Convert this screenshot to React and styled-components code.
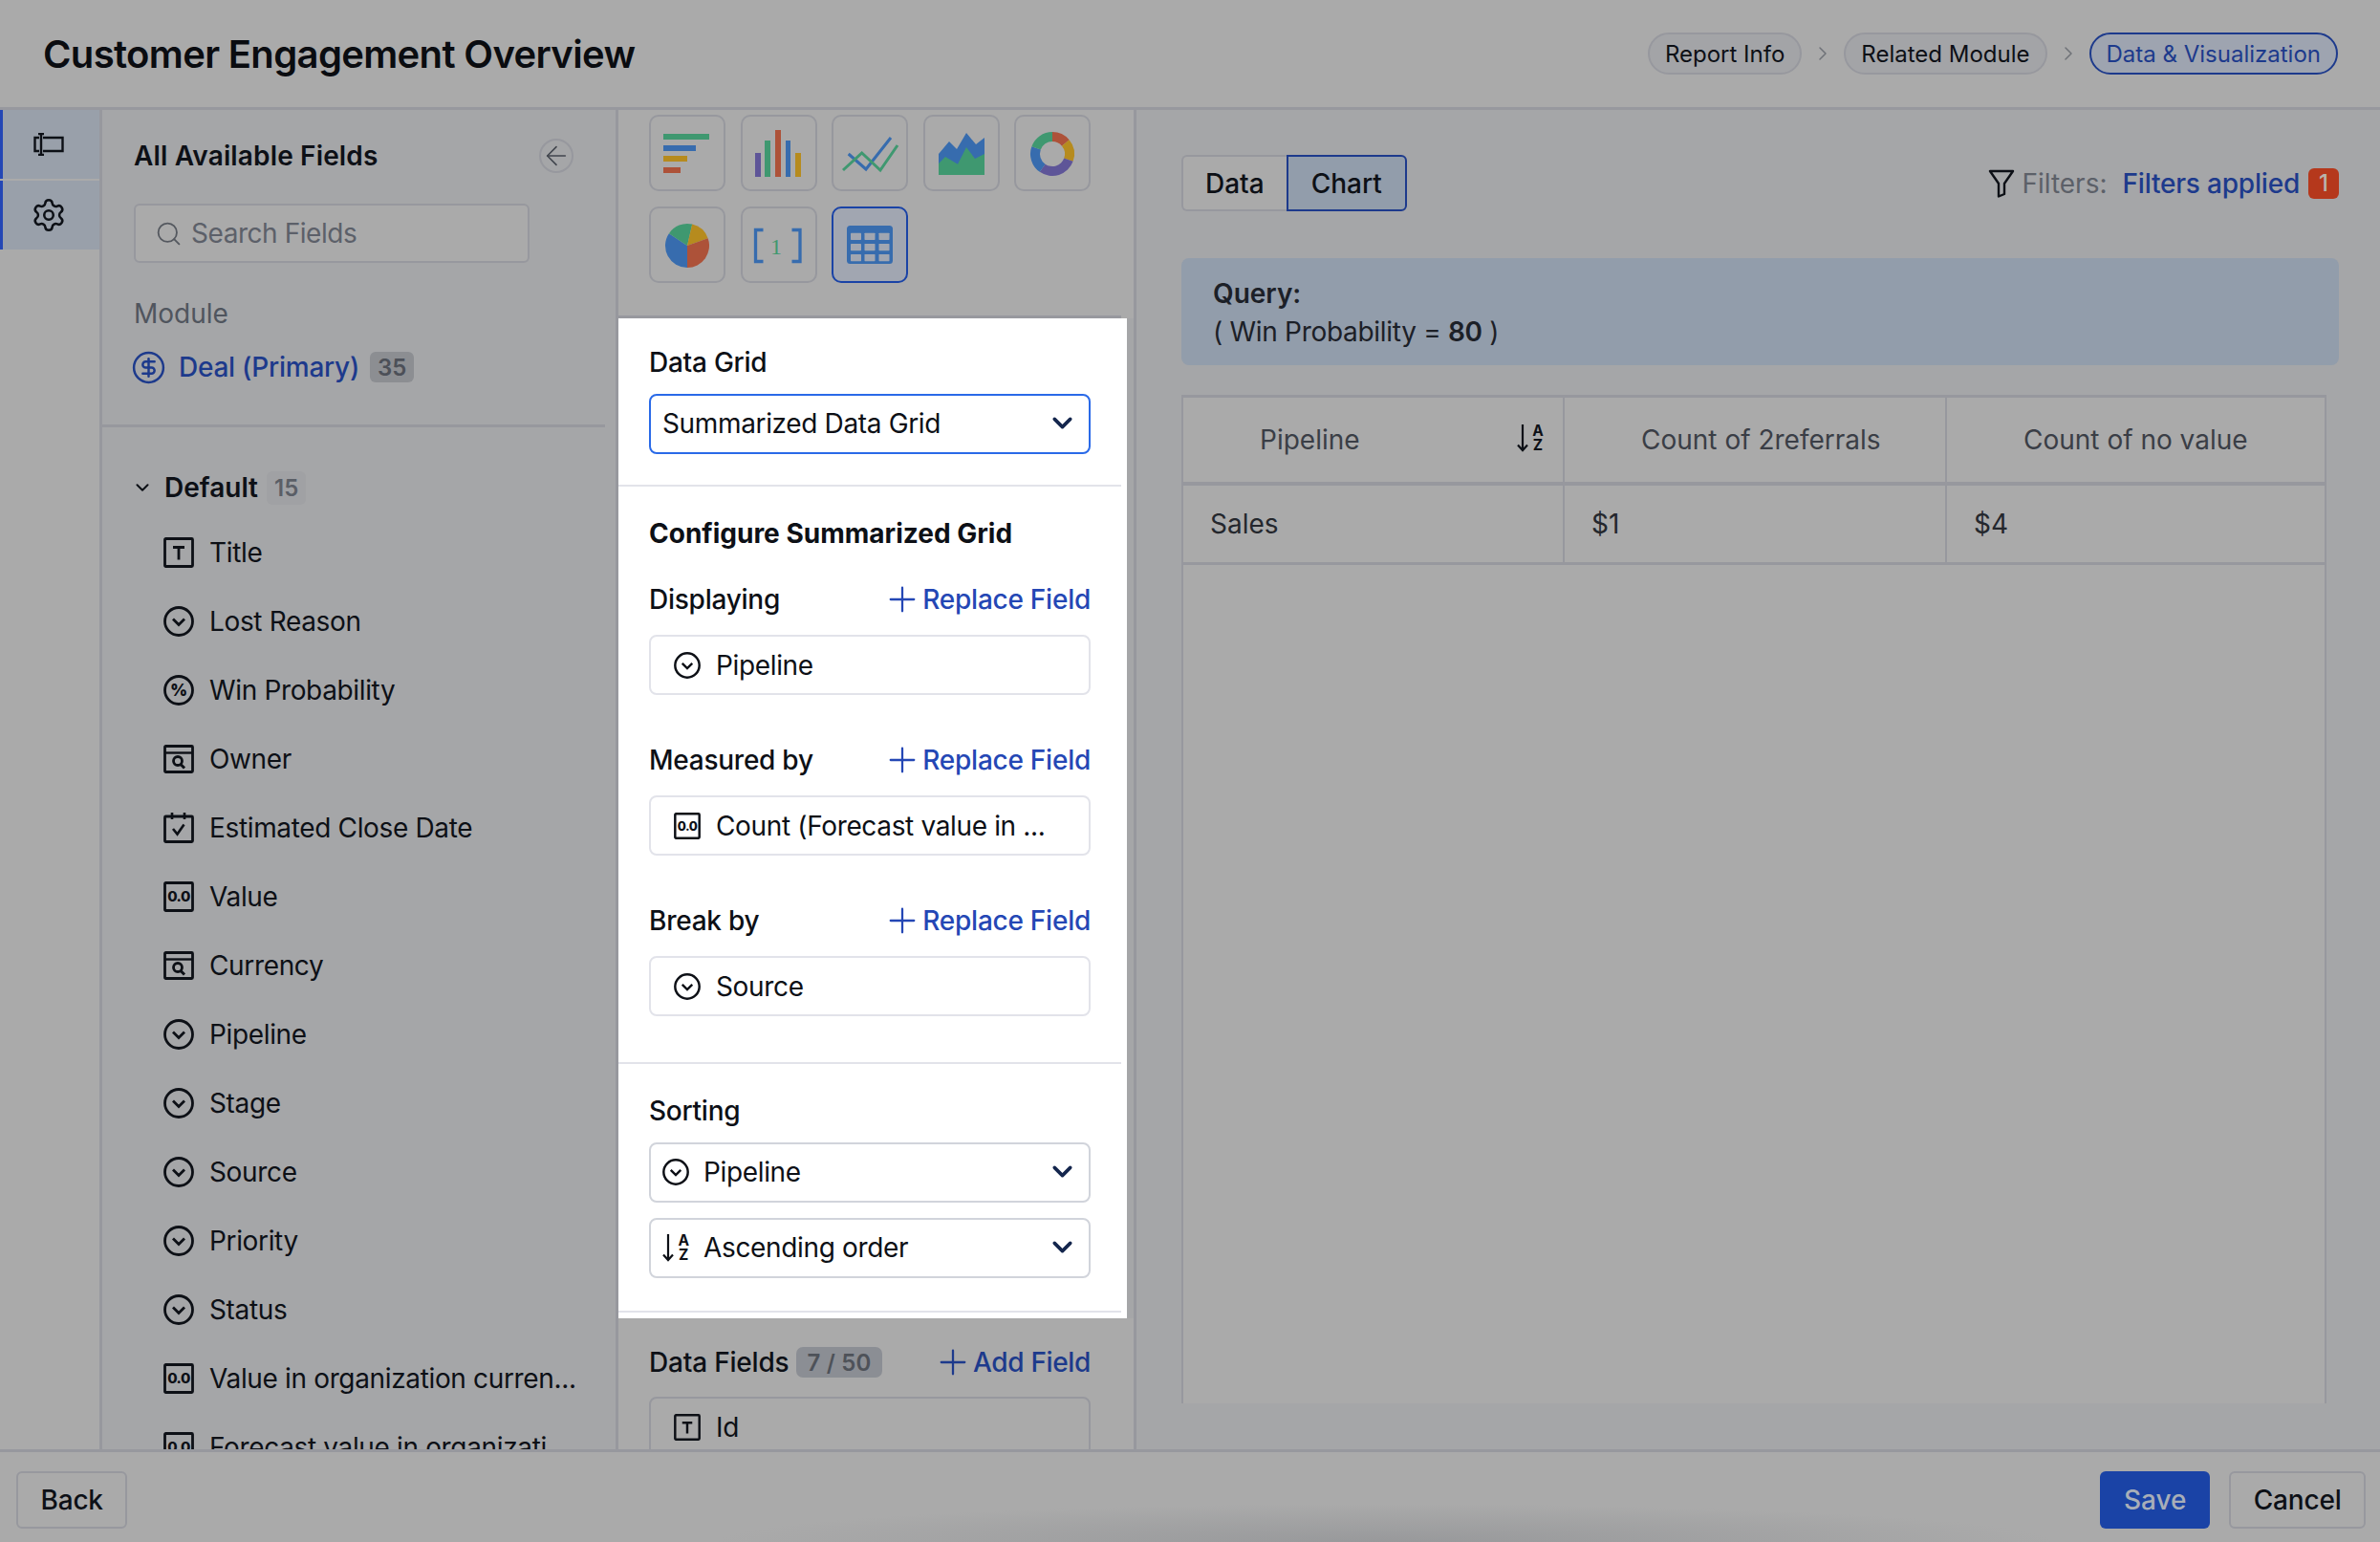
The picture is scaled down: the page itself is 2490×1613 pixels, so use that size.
import styled, { createGlobalStyle } from "styled-components";
import { ArrowLeft, ChevronDown, ChevronRight, CircleDollarSign, Plus, Search, Settings } from "lucide-react";

const COLORS = {
    bar: "#aaaaaa",
    panel: "#a5a6a8",
    line: "#97989e",
    ink: "#0d1016",
    muted: "#50555e",
    navy: "#1d3a8c",
    blue: "#2447b5",
    active: "#929dab",
    green: "#3f9870",
    sky: "#376cae",
    amber: "#b68b1e",
    red: "#ad5239",
    violet: "#5e5598",
};

const GlobalStyle = createGlobalStyle`
    html, body {
        margin: 0;
        padding: 0;
        background: ${COLORS.bar};
        overflow: hidden;
    }
    * {
        box-sizing: border-box;
    }
    body {
        font-family: Inter, "Liberation Sans", sans-serif;
        color: ${COLORS.ink};
    }
`;

const polar = (cx, cy, r, deg) => {
    const rad = ((deg - 90) * Math.PI) / 180;
    return [cx + r * Math.cos(rad), cy + r * Math.sin(rad)];
};

const Slice = ({ from, to, color, hole = 0 }) => {
    const [x0, y0] = polar(40, 40, 23, from);
    const [x1, y1] = polar(40, 40, 23, to);
    const large = to - from > 180 ? 1 : 0;
    if (!hole) {
        return <path d={`M40 40L${x0} ${y0}A23 23 0 ${large} 1 ${x1} ${y1}Z`} fill={color} />;
    }
    const [x2, y2] = polar(40, 40, hole, to);
    const [x3, y3] = polar(40, 40, hole, from);
    return (
        <path
            d={`M${x0} ${y0}A23 23 0 ${large} 1 ${x1} ${y1}L${x2} ${y2}A${hole} ${hole} 0 ${large} 0 ${x3} ${y3}Z`}
            fill={color}
        />
    );
};

const ChartSvg = ({ children }) => (
    <svg width="76" height="75" viewBox="2 2 76 75">{children}</svg>
);

const chartIcons = [
    <ChartSvg key="hbar">
        <rect x="15" y="19" width="48" height="6" fill={COLORS.green} />
        <rect x="15" y="31" width="34" height="6" fill={COLORS.sky} />
        <rect x="15" y="42" width="25" height="6" fill={COLORS.amber} />
        <rect x="15" y="54" width="18" height="6" fill={COLORS.red} />
    </ChartSvg>,
    <ChartSvg key="vbar">
        <rect x="15" y="39" width="6" height="25" fill={COLORS.violet} />
        <rect x="25" y="26" width="6" height="38" fill={COLORS.green} />
        <rect x="36" y="15" width="6" height="49" fill={COLORS.red} />
        <rect x="47" y="26" width="5" height="38" fill={COLORS.sky} />
        <rect x="57" y="39" width="6" height="25" fill={COLORS.amber} />
    </ChartSvg>,
    <ChartSvg key="line">
        <polyline points="17.7,40 36,56 62,23" fill="none" stroke={COLORS.sky} strokeWidth="3" />
        <polyline points="12,57 31.7,39 51,57 69,31" fill="none" stroke={COLORS.green} strokeWidth="3" />
    </ChartSvg>,
    <ChartSvg key="area">
        <polygon points="16,40 27,27 35,35 45,18 55,30 64,23 64,62 16,62" fill={COLORS.sky} />
        <polygon points="16,50 23,43 36,50.7 45,33 54,45 64,40 64,62 16,62" fill={COLORS.green} />
    </ChartSvg>,
    <ChartSvg key="donut">
        <Slice from={0} to={50} color={COLORS.red} hole={13} />
        <Slice from={50} to={110} color={COLORS.amber} hole={13} />
        <Slice from={110} to={215} color={COLORS.violet} hole={13} />
        <Slice from={215} to={290} color={COLORS.sky} hole={13} />
        <Slice from={290} to={360} color={COLORS.green} hole={13} />
    </ChartSvg>,
    <ChartSvg key="pie">
        <Slice from={180} to={304} color={COLORS.sky} />
        <Slice from={304} to={373} color={COLORS.green} />
        <Slice from={13} to={70} color={COLORS.amber} />
        <Slice from={70} to={180} color={COLORS.red} />
    </ChartSvg>,
    <ChartSvg key="number">
        <path d="M23.5 23.5H15.5V56.5H23.5M53.5 23.5H62V56.5H53.5" fill="none" stroke={COLORS.sky} strokeWidth="3.3" />
        <text x="37" y="49" textAnchor="middle" fontFamily="'Liberation Serif', serif" fontSize="24" fill={COLORS.green}>1</text>
    </ChartSvg>,
    <ChartSvg key="table">
        <rect x="16" y="19" width="48" height="40" rx="3.5" fill={COLORS.sky} />
        {[26.7, 38, 49].map(y => [20, 34.5, 49.5].map(x => (
            <rect key={`${x}-${y}`} x={x} y={y} width="11" height="7.2" rx="0.6" fill="#a1a6b1" />
        )))}
    </ChartSvg>,
];

const TextBox = () => (
    <svg viewBox="0 0 32 32" width="100%" height="100%" fill="none" stroke="currentColor">
        <rect x="1.5" y="1.5" width="29" height="29" rx="1" strokeWidth="2.8" />
        <path d="M10 10.5H22M16 10.5V23.5" strokeWidth="2.8" />
    </svg>
);

const PickCircle = () => (
    <svg viewBox="0 0 32 32" width="100%" height="100%" fill="none" stroke="currentColor">
        <circle cx="16" cy="16" r="14.5" strokeWidth="2.8" />
        <path d="M10 13.5L16 19.5L22 13.5" strokeWidth="2.8" />
    </svg>
);

const PercentCircle = () => (
    <svg viewBox="0 0 32 32" width="100%" height="100%" fill="none" stroke="currentColor">
        <circle cx="16" cy="16" r="14.5" strokeWidth="2.8" />
        <text x="16" y="22.3" textAnchor="middle" fontFamily="Inter, sans-serif" fontWeight="900" fontSize="17" fill="currentColor" stroke="none">%</text>
    </svg>
);

const LookupBox = () => (
    <svg viewBox="0 0 32 32" width="100%" height="100%" fill="none" stroke="currentColor">
        <rect x="1.5" y="2.5" width="29" height="27" rx="1" strokeWidth="2.8" />
        <path d="M1.5 9.5H30.5" strokeWidth="2.4" />
        <circle cx="15" cy="18" r="4.5" strokeWidth="2.8" />
        <path d="M18 21.5L22 25.5" strokeWidth="3" />
    </svg>
);

const CalendarBox = () => (
    <svg viewBox="0 0 32 32" width="100%" height="100%" fill="none" stroke="currentColor">
        <rect x="1.5" y="4" width="29" height="26.5" rx="1" strokeWidth="2.8" />
        <path d="M9 0V7M22 0V7" strokeWidth="2.6" />
        <path d="M10 17L14.5 22.5L21.5 12.5" strokeWidth="2.6" />
    </svg>
);

const NumberBox = () => (
    <svg viewBox="0 0 32 32" width="100%" height="100%" fill="none" stroke="currentColor">
        <rect x="1.5" y="1.5" width="29" height="29" rx="1" strokeWidth="2.8" />
        <text x="16" y="21.3" textAnchor="middle" fontFamily="Inter, sans-serif" fontWeight="800" fontSize="15" letterSpacing="-0.5" fill="currentColor" stroke="none">0.0</text>
    </svg>
);

const SortIcon = () => (
    <svg width="30" height="32" viewBox="0 0 30 32" fill="none" stroke="currentColor">
        <path d="M6 2V28.500M1 23.500L6 29L11 23.500" strokeWidth="2.2" />
        <text x="22" y="14" textAnchor="middle" fontFamily="Inter, sans-serif" fontWeight="700" fontSize="15.5" fill="currentColor" stroke="none">A</text>
        <text x="22" y="29" textAnchor="middle" fontFamily="Inter, sans-serif" fontWeight="700" fontSize="15.5" fill="currentColor" stroke="none">Z</text>
    </svg>
);

const FIELD_ICONS = {
    text: TextBox,
    pick: PickCircle,
    percent: PercentCircle,
    lookup: LookupBox,
    date: CalendarBox,
    number: NumberBox,
};

const FIELDS = [
    ["text", "Title"],
    ["pick", "Lost Reason"],
    ["percent", "Win Probability"],
    ["lookup", "Owner"],
    ["date", "Estimated Close Date"],
    ["number", "Value"],
    ["lookup", "Currency"],
    ["pick", "Pipeline"],
    ["pick", "Stage"],
    ["pick", "Source"],
    ["pick", "Priority"],
    ["pick", "Status"],
    ["number", "Value in organization curren..."],
    ["number", "Forecast value in organizati..."],
];

const CONFIG_ROWS = [
    ["Displaying", "pick", "Pipeline"],
    ["Measured by", "number", "Count (Forecast value in ..."],
    ["Break by", "pick", "Source"],
];

const FieldIcon = ({ kind, size = 32 }) => {
    const Icon = FIELD_ICONS[kind];
    return (
        <IconSlot $size={size}>
            <Icon />
        </IconSlot>
    );
};

const App = () => {
    return (
        <Page>
            <GlobalStyle />
            <Header>
                <PageTitle>Customer Engagement Overview</PageTitle>
                <Steps>
                    <Step>Report Info</Step>
                    <StepArrow><ChevronRight size={24} strokeWidth={1.5} /></StepArrow>
                    <Step>Related Module</Step>
                    <StepArrow><ChevronRight size={24} strokeWidth={1.5} /></StepArrow>
                    <Step $current>Data &amp; Visualization</Step>
                </Steps>
            </Header>

            <Body>
                <Rail>
                    <RailItem>
                        <svg width="32" height="24" viewBox="0 0 32 24" fill="none" stroke={COLORS.ink} strokeWidth="2.4">
                            <path d="M10 5H30.5V19H10M6 5H1.5V19H6" />
                            <path d="M8 1V23M5 1H11M5 23H11" />
                        </svg>
                    </RailItem>
                    <RailItem>
                        <Settings size={38} strokeWidth={1.6} />
                    </RailItem>
                </Rail>

                <FieldsPanel>
                    <FieldsTop>
                        <TitleRow>
                            <PanelTitle>All Available Fields</PanelTitle>
                            <RoundButton><ArrowLeft size={32} strokeWidth={1.2} /></RoundButton>
                        </TitleRow>
                        <SearchBox>
                            <Search size={29} strokeWidth={1.5} />
                            Search Fields
                        </SearchBox>
                        <ModuleLabel>Module</ModuleLabel>
                        <ModuleRow>
                            <DollarIcon />
                            <ModuleName>Deal (Primary)</ModuleName>
                            <Count>35</Count>
                        </ModuleRow>
                    </FieldsTop>
                    <GroupRow>
                        <ChevronDown size={22} strokeWidth={2.2} />
                        <GroupName>Default</GroupName>
                        <GroupCount>15</GroupCount>
                    </GroupRow>
                    <FieldList>
                        {FIELDS.map(([kind, name]) => (
                            <FieldRow key={name}>
                                <FieldIcon kind={kind} />
                                {name}
                            </FieldRow>
                        ))}
                    </FieldList>
                </FieldsPanel>

                <ConfigColumn>
                    <TileArea>
                        <Tiles>
                            {chartIcons.map((icon, i) => (
                                <Tile key={i} $active={i === 7}>{icon}</Tile>
                            ))}
                        </Tiles>
                    </TileArea>
                    <TileRule />
                    <ConfigBand>
                        <ConfigCard>
                            <GridSection>
                                <FieldLabel>Data Grid</FieldLabel>
                                <SelectBox $focus>
                                    <span>Summarized Data Grid</span>
                                    <SelectChevron />
                                </SelectBox>
                            </GridSection>
                            <SetupSection>
                                <SetupTitle>Configure Summarized Grid</SetupTitle>
                                {CONFIG_ROWS.map(([label, kind, value]) => (
                                    <SetupBlock key={label}>
                                        <LabelRow>
                                            <FieldLabel>{label}</FieldLabel>
                                            <ReplaceLink><PlusIcon />Replace Field</ReplaceLink>
                                        </LabelRow>
                                        <ValueBox>
                                            <FieldIcon kind={kind} size={28} />
                                            {value}
                                        </ValueBox>
                                    </SetupBlock>
                                ))}
                            </SetupSection>
                            <SortSection>
                                <FieldLabel>Sorting</FieldLabel>
                                <SelectBox>
                                    <SelectValue><FieldIcon kind="pick" size={28} />Pipeline</SelectValue>
                                    <SelectChevron />
                                </SelectBox>
                                <SelectBox>
                                    <SelectValue $tight><SortIcon />Ascending order</SelectValue>
                                    <SelectChevron />
                                </SelectBox>
                            </SortSection>
                        </ConfigCard>
                    </ConfigBand>
                    <DataFields>
                        <LabelRow>
                            <DataLabel>Data Fields <FieldsCount>7 / 50</FieldsCount></DataLabel>
                            <AddLink><PlusIcon />Add Field</AddLink>
                        </LabelRow>
                        <IdBox>
                            <FieldIcon kind="text" size={28} />
                            Id
                        </IdBox>
                    </DataFields>
                </ConfigColumn>

                <Main>
                    <MainTop>
                        <Tabs>
                            <TabButton>Data</TabButton>
                            <TabButton $active>Chart</TabButton>
                        </Tabs>
                        <FilterInfo>
                            <svg width="28" height="30" viewBox="0 0 28 30" fill="none" stroke={COLORS.ink} strokeWidth="2.4" strokeLinejoin="round">
                                <path d="M2 2H26L17 15V26L11 28.5V15Z" />
                            </svg>
                            <FilterLabel>Filters:</FilterLabel>
                            <FilterValue>Filters applied</FilterValue>
                            <FilterBadge>1</FilterBadge>
                        </FilterInfo>
                    </MainTop>
                    <QueryBox>
                        <QueryTitle>Query:</QueryTitle>
                        <QueryText>( Win Probability = <b>80</b> )</QueryText>
                    </QueryBox>
                    <TableWrap>
                        <HeadRow>
                            <HeadCell $pad={82}>
                                Pipeline
                                <SortGlyph><SortIcon /></SortGlyph>
                            </HeadCell>
                            <HeadCell $pad={82}>Count of 2referrals</HeadCell>
                            <HeadCell $pad={82}>Count of no value</HeadCell>
                        </HeadRow>
                        <DataRow>
                            <DataCell>Sales</DataCell>
                            <DataCell>$1</DataCell>
                            <DataCell>$4</DataCell>
                        </DataRow>
                    </TableWrap>
                </Main>
            </Body>

            <Footer>
                <GhostButton>Back</GhostButton>
                <FooterActions>
                    <SaveButton>Save</SaveButton>
                    <GhostButton>Cancel</GhostButton>
                </FooterActions>
            </Footer>
        </Page>
    );
};

const Page = styled.div`
    width: 2490px;
    height: 1613px;
    display: flex;
    flex-direction: column;
    overflow: hidden;
    background: ${COLORS.bar};
`;

const Header = styled.header`
    height: 115px;
    flex: none;
    padding: 0 44px 0 45px;
    display: flex;
    align-items: center;
    justify-content: space-between;
    border-bottom: 3px solid ${COLORS.line};
`;

const PageTitle = styled.h1`
    margin: 0;
    font-size: 40px;
    font-weight: 600;
    letter-spacing: -0.65px;
    color: #0a0c10;
`;

const Steps = styled.nav`
    display: flex;
    align-items: center;
`;

const Step = styled.span`
    height: 44px;
    padding: 0 16px;
    display: flex;
    align-items: center;
    font-size: 24px;
    border-radius: 22px;
    border: 2.5px solid ${p => (p.$current ? COLORS.navy : COLORS.line)};
    background: ${p => (p.$current ? "#9ea4b0" : "#a3a4a7")};
    color: ${p => (p.$current ? COLORS.navy : COLORS.ink)};
`;

const StepArrow = styled.span`
    width: 44px;
    display: flex;
    justify-content: center;
    color: #6f7278;
`;

const Body = styled.div`
    height: 1401px;
    flex: none;
    display: flex;
    overflow: hidden;
`;

const Rail = styled.aside`
    width: 107px;
    flex: none;
    border-right: 3px solid ${COLORS.line};
    background: ${COLORS.bar};
`;

const RailItem = styled.div`
    height: 72px;
    margin-bottom: 2px;
    padding-right: 6px;
    display: flex;
    align-items: center;
    justify-content: center;
    background: #99a0aa;
    border-left: 3px solid ${COLORS.blue};
`;

const FieldsPanel = styled.section`
    width: 540px;
    flex: none;
    overflow: hidden;
    background: ${COLORS.panel};
    border-right: 3px solid ${COLORS.line};
`;

const FieldsTop = styled.div`
    width: 526px;
    padding: 30px 0 44px 33px;
    border-bottom: 3px solid ${COLORS.line};
`;

const TitleRow = styled.div`
    width: 460px;
    height: 36px;
    display: flex;
    align-items: center;
    justify-content: space-between;
`;

const PanelTitle = styled.h2`
    margin: 0;
    font-size: 28px;
    font-weight: 600;
    letter-spacing: 0.15px;
`;

const RoundButton = styled.span`
    width: 36px;
    height: 36px;
    border-radius: 50%;
    border: 2px solid ${COLORS.line};
    display: flex;
    align-items: center;
    justify-content: center;
    color: #42464e;
`;

const SearchBox = styled.div`
    width: 414px;
    height: 62px;
    margin-top: 32px;
    padding-left: 20px;
    display: flex;
    align-items: center;
    gap: 9px;
    font-size: 28px;
    letter-spacing: -0.45px;
    color: #5c6069;
    background: ${COLORS.bar};
    border: 2.5px solid ${COLORS.line};
    border-radius: 6px;
    svg {
        color: #54585f;
    }
`;

const ModuleLabel = styled.div`
    margin-top: 36px;
    height: 34px;
    line-height: 34px;
    font-size: 28px;
    color: ${COLORS.muted};
`;

const ModuleRow = styled.div`
    margin-top: 23px;
    height: 32px;
    display: flex;
    align-items: center;
    color: ${COLORS.navy};
`;

const DollarIcon = styled(CircleDollarSign).attrs({ size: 37, strokeWidth: 1.6 })`
    margin: 0 -2px 0 -3px;
`;

const ModuleName = styled.span`
    margin-left: 15px;
    font-size: 28px;
    font-weight: 500;
    letter-spacing: -0.25px;
`;

const Count = styled.span`
    margin-left: 11px;
    height: 32px;
    padding: 0 8px;
    display: flex;
    align-items: center;
    font-size: 24px;
    font-weight: 600;
    color: #4c5058;
    background: #8c8e92;
    border-radius: 6px;
`;

const GroupRow = styled.div`
    margin-top: 45px;
    padding-left: 31px;
    height: 36px;
    display: flex;
    align-items: center;
`;

const GroupName = styled.span`
    margin-left: 12px;
    font-size: 28px;
    font-weight: 600;
`;

const GroupCount = styled.span`
    margin-left: 9px;
    padding: 3px 8px;
    font-size: 24px;
    font-weight: 600;
    color: #5a5e66;
    background: #a0a1a4;
    border-radius: 6px;
`;

const FieldList = styled.ul`
    margin: 14px 0 0;
    padding: 0 0 0 64px;
    list-style: none;
`;

const FieldRow = styled.li`
    height: 72px;
    display: flex;
    align-items: center;
    gap: 16px;
    font-size: 28px;
    letter-spacing: -0.35px;
    white-space: nowrap;
`;

const IconSlot = styled.span`
    width: ${p => p.$size}px;
    height: ${p => p.$size}px;
    flex: none;
    display: block;
`;

const ConfigColumn = styled.section`
    width: 542px;
    flex: none;
    overflow: hidden;
    background: ${COLORS.bar};
    border-right: 3px solid ${COLORS.line};
`;

const TileArea = styled.div`
    height: 215px;
    padding: 5px 0 0 32px;
`;

const Tiles = styled.div`
    display: grid;
    grid-template-columns: repeat(5, 80px);
    grid-auto-rows: 80px;
    column-gap: 15.5px;
    row-gap: 16px;
`;

const Tile = styled.div`
    display: flex;
    align-items: center;
    justify-content: center;
    border-radius: 10px;
    border: 2.5px solid ${p => (p.$active ? "#1a43a6" : COLORS.line)};
    background: ${p => (p.$active ? "#a1a6b1" : COLORS.bar)};
`;

const TileRule = styled.div`
    width: 526px;
    height: 3px;
    background: ${COLORS.line};
`;

const ConfigBand = styled.div`
    background: ${COLORS.panel};
    padding-right: 7px;
`;

const ConfigCard = styled.div`
    height: 1046px;
    padding-right: 6px;
    background: #fff;
`;

const GridSection = styled.div`
    height: 176px;
    padding: 29px 0 0 32px;
    border-bottom: 2.5px solid #e2e3ea;
`;

const FieldLabel = styled.div`
    font-size: 28px;
    line-height: 34px;
    font-weight: 500;
    letter-spacing: -0.25px;
    color: ${COLORS.ink};
`;

const SelectBox = styled.div`
    width: 462px;
    height: 63px;
    margin-top: ${p => (p.$focus ? "16px" : "0")};
    padding: 0 11px 2px 12px;
    display: flex;
    align-items: center;
    justify-content: space-between;
    font-size: 28px;
    letter-spacing: -0.35px;
    background: #fff;
    border-radius: 8px;
    border: 2.5px solid ${p => (p.$focus ? "#2a6ae8" : "#d1d4db")};
`;

const SelectValue = styled.span`
    display: flex;
    align-items: center;
    gap: ${p => (p.$tight ? "13px" : "15px")};
`;

const SelectChevron = styled(ChevronDown).attrs({ size: 33, strokeWidth: 2.6 })`
    color: #14264d;
`;

const SetupSection = styled.div`
    height: 604px;
    padding: 32px 0 0 32px;
    border-bottom: 2.5px solid #e2e3ea;
`;

const SetupTitle = styled.h3`
    margin: 0 0 35px;
    font-size: 28px;
    line-height: 34px;
    font-weight: 700;
`;

const SetupBlock = styled.div`
    margin-bottom: 51px;
`;

const LabelRow = styled.div`
    width: 462px;
    height: 34px;
    display: flex;
    align-items: center;
    justify-content: space-between;
`;

const PlusIcon = styled(Plus).attrs({ size: 42, strokeWidth: 1.3 })`
    margin: -9px;
`;

const ReplaceLink = styled.span`
    display: flex;
    align-items: center;
    gap: 9px;
    font-size: 28px;
    font-weight: 500;
    letter-spacing: -0.25px;
    color: ${COLORS.blue};
`;

const ValueBox = styled.div`
    width: 462px;
    height: 63px;
    margin-top: 20px;
    padding-left: 24px;
    display: flex;
    align-items: center;
    gap: 16px;
    font-size: 28px;
    letter-spacing: -0.35px;
    border-radius: 8px;
    border: 2.5px solid #e2e3ea;
`;

const SortSection = styled.div`
    height: 260px;
    padding: 32px 0 0 32px;
    display: flex;
    flex-direction: column;
    gap: 16px;
    border-bottom: 2.5px solid #e2e3ea;
`;

const DataFields = styled.div`
    padding: 29px 0 0 32px;
`;

const DataLabel = styled.div`
    display: flex;
    align-items: center;
    gap: 8px;
    font-size: 28px;
    font-weight: 500;
    letter-spacing: -0.2px;
`;

const FieldsCount = styled.span`
    height: 32px;
    padding: 0 11px;
    display: flex;
    align-items: center;
    font-size: 24px;
    font-weight: 600;
    letter-spacing: 0.2px;
    color: #4e5259;
    background: #8b8e94;
    border-radius: 7px;
`;

const AddLink = styled(ReplaceLink)`
    letter-spacing: -0.35px;
    color: ${COLORS.navy};
`;

const IdBox = styled(ValueBox)`
    margin-top: 19px;
    border-color: ${COLORS.line};
`;

const Main = styled.main`
    flex: 1;
    padding: 47px 43px 48px 47px;
    display: flex;
    flex-direction: column;
    background: ${COLORS.panel};
`;

const MainTop = styled.div`
    height: 59px;
    flex: none;
    display: flex;
    align-items: center;
    justify-content: space-between;
`;

const Tabs = styled.div`
    display: flex;
`;

const TabButton = styled.button`
    height: 59px;
    padding: 0 ${p => (p.$active ? "24px" : "23px")};
    font: inherit;
    font-size: 28px;
    font-weight: 500;
    color: ${COLORS.ink};
    background: ${p => (p.$active ? COLORS.active : COLORS.bar)};
    border: 2.5px solid ${p => (p.$active ? COLORS.navy : COLORS.line)};
    border-right-width: ${p => (p.$active ? "2.5px" : "0")};
    border-radius: ${p => (p.$active ? "0 6px 6px 0" : "6px 0 0 6px")};
`;

const FilterInfo = styled.div`
    display: flex;
    align-items: center;
    font-size: 28px;
`;

const FilterLabel = styled.span`
    margin-left: 7px;
    color: #5c6068;
`;

const FilterValue = styled.span`
    margin-left: 16px;
    font-weight: 500;
    letter-spacing: -0.2px;
    color: ${COLORS.navy};
`;

const FilterBadge = styled.span`
    width: 32px;
    height: 32px;
    margin-left: 9px;
    display: flex;
    align-items: center;
    justify-content: center;
    font-size: 24px;
    font-weight: 500;
    color: #b9b3ac;
    background: #b5381c;
    border-radius: 6px;
`;

const QueryBox = styled.div`
    height: 112px;
    flex: none;
    margin-top: 49px;
    padding: 17px 33px 0;
    font-size: 28px;
    line-height: 40px;
    color: #1c2027;
    background: ${COLORS.active};
    border-radius: 8px;
`;

const QueryTitle = styled.div`
    font-weight: 600;
`;

const QueryText = styled.div`
    letter-spacing: -0.3px;
    b {
        font-weight: 600;
    }
`;

const TableWrap = styled.div`
    flex: 1;
    width: 1198px;
    margin-top: 31px;
    background: ${COLORS.bar};
    border: 2px solid ${COLORS.line};
    border-top-width: 3px;
    border-bottom: 0;
`;

const HeadRow = styled.div`
    height: 92px;
    display: grid;
    grid-template-columns: 399px 400px 1fr;
    border-bottom: 4px solid ${COLORS.line};
`;

const HeadCell = styled.div`
    padding: 0 18px 0 ${p => p.$pad - 2}px;
    display: flex;
    align-items: center;
    justify-content: space-between;
    font-size: 28px;
    color: #3a3e46;
    border-right: 2px solid ${COLORS.line};
    &:last-child {
        border-right: 0;
    }
`;

const SortGlyph = styled.span`
    display: flex;
    margin-top: -4px;
    color: ${COLORS.ink};
`;

const DataRow = styled.div`
    height: 83px;
    display: grid;
    grid-template-columns: 399px 400px 1fr;
    border-bottom: 3px solid ${COLORS.line};
`;

const DataCell = styled.div`
    padding-left: 28px;
    display: flex;
    align-items: center;
    font-size: 28px;
    color: #24272d;
    border-right: 2px solid ${COLORS.line};
    &:last-child {
        border-right: 0;
    }
`;

const Footer = styled.footer`
    flex: 1;
    padding: 20px 15px 0 17px;
    display: flex;
    justify-content: space-between;
    align-items: flex-start;
    border-top: 3px solid ${COLORS.line};
    background: radial-gradient(ellipse 700px 40px at 1450px 100%, #98999b, ${COLORS.bar});
`;

const FooterActions = styled.div`
    display: flex;
    gap: 20px;
`;

const GhostButton = styled.button`
    height: 60px;
    padding: 0 23.5px;
    font: inherit;
    font-size: 28px;
    font-weight: 500;
    letter-spacing: -0.2px;
    color: ${COLORS.ink};
    background: ${COLORS.bar};
    border: 2.5px solid ${COLORS.line};
    border-radius: 6px;
`;

const SaveButton = styled.button`
    width: 115px;
    height: 60px;
    font: inherit;
    font-size: 28px;
    font-weight: 500;
    color: #a7aeb8;
    background: #1a43a6;
    border: 0;
    border-radius: 6px;
`;

export default App;
